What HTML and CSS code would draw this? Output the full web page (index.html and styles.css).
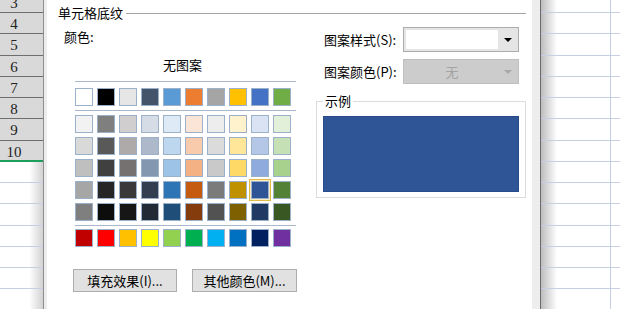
FILE: index.html
```html
<!DOCTYPE html>
<html lang="zh-CN">
<head>
    <meta charset="UTF-8">
    <meta name="viewport" content="width=device-width, initial-scale=1.0">
    <title>设置单元格格式 - 填充</title>
    <link rel="stylesheet" href="styles.css">
</head>
<body>
    <div class="screen">
        <div class="sheet sheet-left" id="leftSheet"></div>

        <div class="dialog">
            <div class="page">
                <div class="section-title">
                    <span>单元格底纹</span>
                    <div class="rule"></div>
                </div>

                <div class="columns">
                    <div class="col-left">
                        <div class="color-label">颜色:</div>
                        <div class="no-pattern">无图案</div>
                        <div class="sep"></div>
                        <div class="swatch-row theme-row" id="themeRow"></div>
                        <div class="sep sep-mid"></div>
                        <div class="shades" id="shades"></div>
                        <div class="sep sep-mid"></div>
                        <div class="swatch-row std-row" id="stdRow"></div>

                        <div class="buttons">
                            <button class="btn btn-fill">填充效果(I)...</button>
                            <button class="btn btn-more">其他颜色(M)...</button>
                        </div>
                    </div>

                    <div class="col-right">
                        <div class="field field-style">
                            <label class="field-label">图案样式(S):</label>
                            <div class="combo">
                                <div class="combo-value"></div>
                                <div class="combo-arrow"><span class="tri"></span></div>
                            </div>
                        </div>
                        <div class="field field-color">
                            <label class="field-label">图案颜色(P):</label>
                            <div class="combo disabled">
                                <div class="combo-value">无</div>
                                <div class="combo-arrow"><span class="tri"></span></div>
                            </div>
                        </div>

                        <fieldset class="sample">
                            <legend>示例</legend>
                            <div class="preview"></div>
                        </fieldset>
                    </div>
                </div>
            </div>
        </div>

        <div class="sheet sheet-right" id="rightSheet"></div>
    </div>

    <script>
        const themeColors = ['#FFFFFF', '#000000', '#E7E6E6', '#44546A', '#5B9BD5', '#ED7D31', '#A5A5A5', '#FFC000', '#4472C4', '#70AD47'];
        const shadeRows = [
            ['#F2F2F2', '#7F7F7F', '#D0CECE', '#D6DCE5', '#DEEBF7', '#FBE5D6', '#EDEDED', '#FFF2CC', '#DAE3F3', '#E2F0D9'],
            ['#D9D9D9', '#595959', '#AEAAAA', '#ADB9CA', '#BDD7EE', '#F8CBAD', '#DBDBDB', '#FFE699', '#B4C7E7', '#C5E0B4'],
            ['#BFBFBF', '#404040', '#757171', '#8497B0', '#9DC3E6', '#F4B183', '#C9C9C9', '#FFD966', '#8FAADC', '#A9D18E'],
            ['#A6A6A6', '#262626', '#3A3838', '#333F50', '#2E75B6', '#C55A11', '#7B7B7B', '#BF9000', '#2F5597', '#538135'],
            ['#7F7F7F', '#0D0D0D', '#171616', '#222A35', '#1F4E79', '#843C0C', '#525252', '#7F6000', '#203864', '#385723']
        ];
        const standardColors = ['#C00000', '#FF0000', '#FFC000', '#FFFF00', '#92D050', '#00B050', '#00B0F0', '#0070C0', '#002060', '#7030A0'];
        const selected = '#2F5597';

        function fillRow(row, colors) {
            colors.forEach(color => {
                const swatch = document.createElement('div');
                swatch.className = 'swatch';
                swatch.style.background = color;
                swatch.title = color;
                row.appendChild(swatch);
            });
        }

        fillRow(document.getElementById('themeRow'), themeColors);
        fillRow(document.getElementById('stdRow'), standardColors);

        const shades = document.getElementById('shades');
        shadeRows.forEach((colors, i) => {
            const row = document.createElement('div');
            row.className = 'swatch-row';
            fillRow(row, colors);
            if (i === 3) {
                row.children[8].classList.add('selected');
            }
            shades.appendChild(row);
        });

        document.querySelector('.preview').style.background = selected;

        // worksheet rows behind the dialog
        const leftSheet = document.getElementById('leftSheet');
        for (let n = 3; n <= 17; n++) {
            const row = document.createElement('div');
            if (n <= 10) {
                row.className = 'row head' + (n === 10 ? ' active' : '');
                row.innerHTML = '<span class="num">' + n + '</span>';
            } else {
                row.className = 'row blank';
            }
            leftSheet.appendChild(row);
        }

        const rightSheet = document.getElementById('rightSheet');
        for (let n = 3; n <= 17; n++) {
            const row = document.createElement('div');
            row.className = 'row';
            row.innerHTML = '<div class="cell"></div>';
            rightSheet.appendChild(row);
        }
    </script>
</body>
</html>
```

FILE: styles.css
```css
html, body {
    margin: 0;
    padding: 0;
    background: #fff;
}
body {
    font-family: "Noto Sans CJK SC", "Noto Sans", sans-serif;
    font-size: 13px;
    color: #000;
}
.screen {
    display: flex;
    width: 620px;
    height: 309px;
    overflow: hidden;
}

/* worksheet */
.sheet {
    display: flex;
    flex-direction: column;
    margin-top: -8.25px;
}
.row {
    box-sizing: border-box;
    height: 21.25px;
    flex-shrink: 0;
}
.sheet-left {
    width: 43px;
}
.sheet-left .head {
    background: #d9d9d9;
    border-bottom: 1px solid #6e6e6e;
    font-family: "Liberation Serif", serif;
    font-size: 15px;
    line-height: 21px;
    color: #222;
}
.sheet-left .head.active {
    border-bottom: 2px solid #1f9d5a;
}
.num {
    display: inline-block;
    width: 28px;
    padding-top: 1px;
    text-align: center;
}
.sheet-left .blank {
    border-bottom: 1px solid #c6cee2;
    background: linear-gradient(to right, #fff 68%, #d2d2d2);
}
.sheet-right {
    flex: 1;
    background: linear-gradient(to right, #bdbdbd, #fff 16px);
}
.sheet-right .row {
    border-bottom: 1px solid #c6cee2;
}
.sheet-right .cell {
    box-sizing: border-box;
    width: 70px;
    height: 100%;
    border-right: 1px solid #c6cee2;
}

/* dialog */
.dialog {
    box-sizing: border-box;
    width: 498px;
    flex-shrink: 0;
    display: flex;
    background: #ededed;
    border-left: 1px solid #8e8e8e;
    border-right: 1px solid #6c6c6c;
    padding: 0 8px 0 3px;
}
.page {
    flex: 1;
    background: #fff;
    padding: 0 6px 0 11px;
}
.section-title {
    display: flex;
    align-items: center;
    height: 26px;
}
.section-title span {
    line-height: 26px;
}
.rule {
    flex: 1;
    height: 1px;
    margin-left: 3px;
    background: #a5a5a5;
}
.columns {
    display: flex;
}
.col-left {
    width: 258px;
}
.col-right {
    width: 210px;
}

/* colour palette */
.color-label {
    height: 22px;
    line-height: 22px;
    padding-left: 6px;
}
.no-pattern {
    box-sizing: border-box;
    width: 221px;
    height: 33px;
    margin-left: 17px;
    padding-right: 6px;
    line-height: 33px;
    text-align: center;
}
.sep {
    width: 221px;
    height: 1px;
    margin-left: 17px;
    background: #a9b7ca;
}
.sep-mid {
    margin-top: 4px;
}
.swatch-row {
    display: flex;
    gap: 4px;
}
.theme-row {
    margin-top: 6px;
    margin-left: 17px;
}
.shades {
    display: flex;
    flex-direction: column;
    gap: 4px;
    margin-top: 4px;
    margin-left: 17px;
}
.std-row {
    margin-top: 3px;
    margin-left: 17px;
}
.swatch {
    box-sizing: border-box;
    width: 18px;
    height: 18px;
    border: 1px solid #9bb0cb;
}
.swatch.selected {
    box-shadow: 0 0 0 1px #fbeec0, 0 0 0 2px #e2b848;
}
.buttons {
    display: flex;
    gap: 15px;
    margin-top: 22px;
    margin-left: 15px;
}
.btn {
    box-sizing: border-box;
    height: 23px;
    padding: 0;
    background: #e1e1e1;
    border: 1px solid #adadad;
    font-family: inherit;
    font-size: 13px;
    color: #000;
}
.btn-fill {
    width: 104px;
}
.btn-more {
    width: 105px;
}

/* pattern fields */
.field {
    display: flex;
    align-items: center;
    height: 25px;
}
.field-style {
    margin-top: 1px;
}
.field-color {
    margin-top: 7px;
}
.field-label {
    box-sizing: border-box;
    width: 87px;
    padding-left: 8px;
}
.combo {
    box-sizing: border-box;
    display: flex;
    width: 116px;
    height: 25px;
    padding: 2px 0 2px 2px;
    background: #e5e5e5;
    border: 1px solid #acacac;
}
.combo-value {
    flex: 1;
    background: #fff;
    text-align: center;
    line-height: 19px;
}
.combo-arrow {
    width: 20px;
    display: flex;
    align-items: center;
    justify-content: center;
}
.tri {
    width: 0;
    height: 0;
    border-left: 4px solid transparent;
    border-right: 4px solid transparent;
    border-top: 4px solid #000;
}
.combo.disabled {
    background: #cccccc;
    border-color: #bfbfbf;
}
.combo.disabled .combo-value {
    background: transparent;
    color: #a3a3a3;
}
.combo.disabled .tri {
    border-top-color: #a8a8a8;
}

/* sample */
.sample {
    margin: 9px 0 0;
    padding: 7px 6px 5px;
    border: 1px solid #dcdcdc;
    min-width: 0;
}
.sample legend {
    padding: 0 2px;
    line-height: 16px;
}
.preview {
    box-sizing: border-box;
    height: 76px;
    border: 1px solid #28498a;
}
```
